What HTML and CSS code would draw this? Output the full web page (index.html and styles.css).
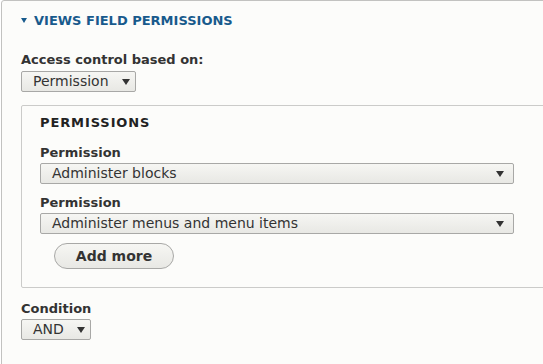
FILE: index.html
```html
<!DOCTYPE html>
<html lang="en">
<head>
  <meta charset="UTF-8" />
  <title>Views field permissions</title>
  <link rel="stylesheet" href="styles.css">
</head>
<body>
  <div class="details">
    <div class="summary"><span class="toggle"></span>Views field permissions</div>

    <div class="form-item">
      <div class="label">Access control based on:</div>
      <div class="select">Permission</div>
    </div>

    <div class="fieldset">
      <div class="legend">Permissions</div>
      <div class="form-item">
        <div class="label">Permission</div>
        <div class="select wide">Administer blocks</div>
      </div>
      <div class="form-item second">
        <div class="label">Permission</div>
        <div class="select wide">Administer menus and menu items</div>
      </div>
      <button class="button">Add more</button>
    </div>

    <div class="form-item">
      <div class="label">Condition</div>
      <div class="select">AND</div>
    </div>
  </div>
</body>
</html>
```

FILE: styles.css
```css
* {
  box-sizing: border-box;
}
html, body {
  margin: 0;
  padding: 0;
  overflow: hidden;
  background: #fff;
}
body {
  font-family: 'DejaVu Sans', 'Liberation Sans', sans-serif;
  color: #333;
  width: 543px;
  height: 364px;
}
.details {
  margin-left: 1px;
  width: 570px;
  height: 400px;
  border: 1px solid #c2c2c0;
  border-radius: 3px;
  background: #fcfcfa;
  padding: 12px 0 0 19px;
}
.summary {
  display: flex;
  align-items: center;
  font-size: 13px;
  line-height: 16px;
  font-weight: bold;
  text-transform: uppercase;
  color: #185a8c;
  margin-bottom: 23px;
}
.toggle {
  width: 0;
  height: 0;
  border-left: 3.5px solid transparent;
  border-right: 3.5px solid transparent;
  border-top: 5px solid #185a8c;
  margin: 0 7px 1px 0;
}
.label {
  font-size: 13px;
  line-height: 16px;
  font-weight: bold;
  color: #333;
  margin-bottom: 3px;
}
.select {
  display: flex;
  align-items: center;
  width: max-content;
  height: 21px;
  padding: 0 5px 1px 11px;
  border: 1px solid #a8a8a6;
  border-radius: 2px;
  background: linear-gradient(#f6f6f3, #e8e8e4);
  font-size: 14px;
  line-height: 17px;
  color: #333;
}
.select::after {
  content: "";
  width: 0;
  height: 0;
  margin-left: 13px;
  margin-top: 1px;
  border-left: 4px solid transparent;
  border-right: 4px solid transparent;
  border-top: 6px solid #333;
}
.select.wide {
  width: 474px;
  justify-content: space-between;
  padding-right: 9px;
}
.fieldset {
  margin-top: 13px;
  width: 540px;
  border: 1px solid #cbcbc9;
  border-radius: 2px;
  padding: 9px 0 18px 18px;
}
.legend {
  font-size: 13px;
  line-height: 16px;
  font-weight: bold;
  letter-spacing: 0.9px;
  text-transform: uppercase;
  color: #222;
  margin-bottom: 14px;
}
.fieldset .label {
  margin-bottom: 2px;
}
.form-item.second {
  margin-top: 11px;
}
.button {
  display: block;
  margin: 9px 0 0 14px;
  width: 120px;
  height: 26px;
  border: 1px solid #a8a8a6;
  border-radius: 13px;
  background: linear-gradient(#f6f6f3, #e8e8e4);
  font-family: 'DejaVu Sans', 'Liberation Sans', sans-serif;
  font-size: 14px;
  font-weight: bold;
  color: #333;
  padding: 0 0 1px;
}
.fieldset + .form-item {
  margin-top: 13px;
}
.fieldset + .form-item .label {
  margin-bottom: 2px;
}
```
